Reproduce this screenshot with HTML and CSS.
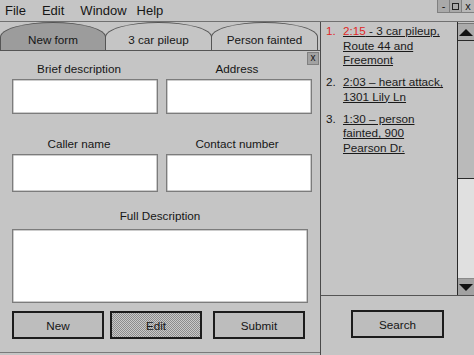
FILE: index.html
```html
<!DOCTYPE html>
<html>
<head>
<meta charset="utf-8">
<link rel="stylesheet" href="styles.css">
</head>
<body>
<div class="app">
  <header class="menubar">
    <span class="menu">File</span>
    <span class="menu">Edit</span>
    <span class="menu">Window</span>
    <span class="menu">Help</span>
    <div class="winctl">
      <span class="wbtn">-</span>
      <span class="wbtn"><i class="sq"></i></span>
      <span class="wbtn wclose">x</span>
    </div>
  </header>
  <div class="main">
    <section class="left">
      <nav class="tabs">
        <div class="tab active">New form</div>
        <div class="tab t2">3 car pileup</div>
        <div class="tab t3">Person fainted</div>
      </nav>
      <div class="form">
        <span class="close">x</span>
        <div class="grid row1">
          <div class="field"><label>Brief description</label><div class="box h35"></div></div>
          <div class="field f2"><label>Address</label><div class="box h35"></div></div>
        </div>
        <div class="grid row2">
          <div class="field"><label>Caller name</label><div class="box h38"></div></div>
          <div class="field f2"><label>Contact number</label><div class="box h38"></div></div>
        </div>
        <div class="full">
          <label>Full Description</label>
          <div class="box big"></div>
        </div>
        <div class="buttons">
          <button class="btn">New</button>
          <button class="btn edit">Edit</button>
          <button class="btn submit">Submit</button>
        </div>
      </div>
    </section>
    <aside class="right">
      <div class="listarea">
        <ol class="list">
          <li class="first"><span class="num">1.</span><a><span class="red">2:15</span> - 3 car pileup,<br>Route 44 and<br>Freemont</a></li>
          <li><span class="num">2.</span><a>2:03 – heart attack,<br>1301 Lily Ln</a></li>
          <li><span class="num">3.</span><a>1:30 – person<br>fainted, 900<br>Pearson Dr.</a></li>
        </ol>
        <div class="scrollbar">
          <div class="sbtn up"><i class="tri-up"></i></div>
          <div class="thumb"></div>
          <div class="track"></div>
          <div class="sbtn down"><i class="tri-down"></i></div>
        </div>
      </div>
      <div class="searchbar">
        <button class="btn search">Search</button>
      </div>
    </aside>
  </div>
</div>
</body>
</html>
```
FILE: styles.css
```css
html, body {
  margin: 0;
  padding: 0;
  background: #c5c5c5;
}
body {
  font-family: "Liberation Sans", Arial, sans-serif;
  font-size: 11.7px;
  color: #161616;
}
.app {
  width: 474px;
  height: 355px;
  display: flex;
  flex-direction: column;
  overflow: hidden;
}
.menubar {
  height: 21px;
  border-bottom: 1px solid #707070;
  display: flex;
  align-items: center;
  padding-left: 5px;
  font-size: 13px;
}
.menu { margin-right: 16px; line-height: 21px; }
.menu:nth-child(3) { margin-right: 10px; }
.winctl {
  margin-left: auto;
  align-self: flex-start;
  display: flex;
}
.wbtn {
  width: 11px;
  height: 12px;
  background: #a9a9a9;
  border-left: 1px solid #808080;
  border-bottom: 1px solid #808080;
  display: flex;
  align-items: center;
  justify-content: center;
  font-size: 11px;
  line-height: 12px;
}
.wclose { background: #b8b8b8; width: 12px; }
.sq {
  display: block;
  width: 5px;
  height: 5px;
  border: 1px solid #222;
}
.main {
  flex: 1;
  display: flex;
  min-height: 0;
}
.left {
  width: 320px;
  border-right: 1px solid #4a4a4a;
  display: flex;
  flex-direction: column;
}
.tabs {
  height: 28px;
  display: flex;
  border-bottom: 1px solid #555;
}
.tab {
  box-sizing: border-box;
  height: 28px;
  border: 1px solid #555;
  border-bottom: none;
  border-radius: 50% 50% 0 0 / 15px 15px 0 0;
  display: flex;
  align-items: flex-end;
  justify-content: center;
  padding-bottom: 4px;
  font-size: 11.7px;
}
.tab.active { width: 106px; background: #9c9c9c; }
.tab.t2 { width: 107px; margin-left: -1px; }
.tab.t3 { width: 107px; margin-left: -1px; }
.form {
  flex: 1;
  position: relative;
  border-bottom: 1px solid #7a7a7a;
  margin-bottom: 2px;
}
.close {
  position: absolute;
  top: 1px;
  right: 1px;
  width: 10px;
  height: 11px;
  background: #a2a2a2;
  border: 1px solid #808080;
  font-size: 10px;
  line-height: 10px;
  text-align: center;
}
.grid {
  display: grid;
  grid-template-columns: 158px 158px;
}
.row1 { padding-top: 11px; }
.row2 { margin-top: 23px; }
.field label, .full label {
  display: block;
  text-align: center;
  line-height: 14px;
  height: 14px;
}
.field .box { margin-left: 12px; margin-top: 3px; width: 146px; }
.field.f2 .box { margin-left: 8px; }
.box {
  box-sizing: border-box;
  background: #fff;
  border: 1px solid #7c7c7c;
  box-shadow: inset 0 0 0 0.5px #9a9a9a;
}
.h35 { height: 35px; }
.h38 { height: 38px; }
.full { margin-top: 17px; }
.full label { padding-left: 2px; width: 316px; }
.full .box { margin: 6px 0 0 12px; width: 296px; height: 74px; }
.buttons {
  display: flex;
  margin: 8px 0 0 12px;
}
.btn {
  box-sizing: border-box;
  width: 92px;
  height: 28px;
  background: #bdbdbd;
  border: 2px solid #1c1c1c;
  font-family: "Liberation Sans", Arial, sans-serif;
  font-size: 11.7px;
  color: #161616;
  padding: 0;
}
.btn.edit {
  margin-left: 6px;
  background: repeating-conic-gradient(#8c8c8c 0 25%, #c9c9c9 0 50%) 0 0 / 2px 2px;
}
.btn.submit { margin-left: 11px; }
.right {
  flex: 1;
  display: flex;
  flex-direction: column;
}
.listarea {
  height: 273px;
  display: flex;
  border-bottom: 1px solid #555;
}
.list {
  flex: 1;
  margin: 0;
  padding: 2px 0 0 5px;
  list-style: none;
}
.list li {
  display: flex;
  line-height: 14.5px;
  margin-bottom: 7.5px;
}
.num { width: 17px; flex: none; }
.list a { text-decoration: underline; color: #1a1a1a; }
.first .num, .red { color: #e02828; }
.scrollbar {
  width: 16px;
  border-left: 1px solid #2a2a2a;
  display: flex;
  flex-direction: column;
  padding-top: 1px;
}
.sbtn {
  height: 16px;
  display: flex;
  align-items: center;
  justify-content: center;
  flex: none;
}
.sbtn.up { background: #ababab; border-bottom: 1px solid #2a2a2a; border-top: 1px solid #777; }
.sbtn.down { background: #a2a2a2; border-top: 1px solid #8a8a8a; }
.thumb { height: 137px; background: #bababa; border-bottom: 1px solid #2a2a2a; flex: none; }
.track { flex: 1; background: #e0e0e0; }
.tri-up {
  width: 0; height: 0;
  border-left: 7px solid transparent;
  border-right: 7px solid transparent;
  border-bottom: 7px solid #111;
}
.tri-down {
  width: 0; height: 0;
  border-left: 7px solid transparent;
  border-right: 7px solid transparent;
  border-top: 7px solid #111;
}
.searchbar {
  flex: 1;
  display: flex;
  justify-content: center;
  align-items: flex-start;
  padding-top: 14px;
}
.btn.search { width: 93px; }
```
